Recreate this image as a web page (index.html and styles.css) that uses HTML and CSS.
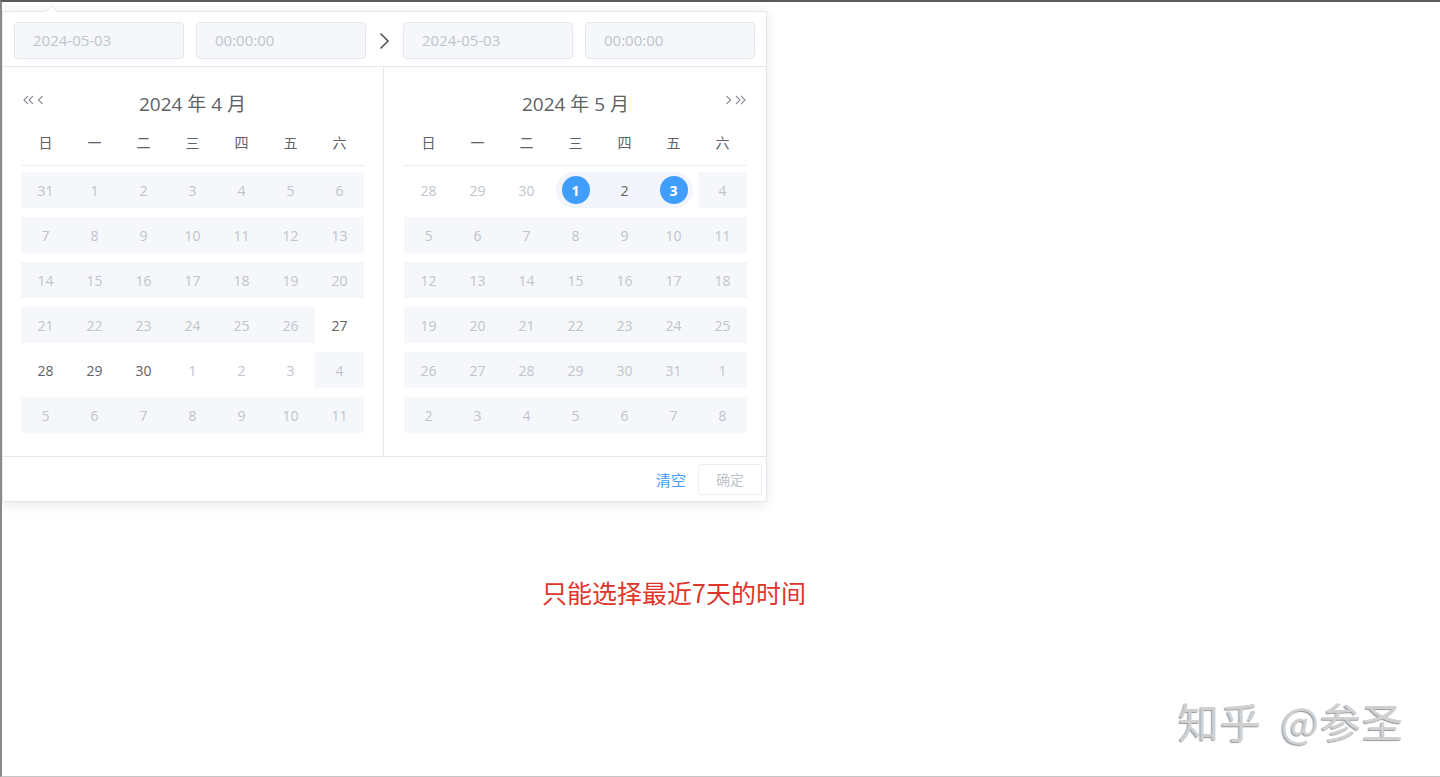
FILE: index.html
```html
<!DOCTYPE html>
<html lang="zh-CN">
<head>
<meta charset="utf-8">
<title>日期范围选择</title>
<link rel="stylesheet" href="styles.css">
</head>
<body>
<div class="frame">
  <div class="picker">
    <div class="picker-head">
      <div class="inp">2024-05-03</div>
      <div class="inp">00:00:00</div>
      <div class="sep"><svg width="11" height="18" viewBox="0 0 11 18"><path d="M1.5 1.5 L9 9 L1.5 16.5" fill="none" stroke="#555" stroke-width="1.6"/></svg></div>
      <div class="inp">2024-05-03</div>
      <div class="inp">00:00:00</div>
    </div>
    <div class="picker-body">
      <div class="panel panel-left">
        <div class="ptitle">
          <span class="nav nav-left">
            <svg width="11" height="10" viewBox="0 0 11 10"><path d="M5 1 L1 5 L5 9 M10 1 L6 5 L10 9" fill="none" stroke="#909399" stroke-width="1.2"/></svg>
            <svg width="7" height="10" viewBox="0 0 7 10"><path d="M5.5 1 L1.5 5 L5.5 9" fill="none" stroke="#909399" stroke-width="1.2"/></svg>
          </span>
          2024 年 4 月
        </div>
        <div class="week"><span>日</span><span>一</span><span>二</span><span>三</span><span>四</span><span>五</span><span>六</span></div>
        <div class="days">
          <span class="c d">31</span><span class="c d">1</span><span class="c d">2</span><span class="c d">3</span><span class="c d">4</span><span class="c d">5</span><span class="c d">6</span>
          <span class="c d">7</span><span class="c d">8</span><span class="c d">9</span><span class="c d">10</span><span class="c d">11</span><span class="c d">12</span><span class="c d">13</span>
          <span class="c d">14</span><span class="c d">15</span><span class="c d">16</span><span class="c d">17</span><span class="c d">18</span><span class="c d">19</span><span class="c d">20</span>
          <span class="c d">21</span><span class="c d">22</span><span class="c d">23</span><span class="c d">24</span><span class="c d">25</span><span class="c d">26</span><span class="c a">27</span>
          <span class="c a">28</span><span class="c a">29</span><span class="c a">30</span><span class="c o">1</span><span class="c o">2</span><span class="c o">3</span><span class="c d">4</span>
          <span class="c d">5</span><span class="c d">6</span><span class="c d">7</span><span class="c d">8</span><span class="c d">9</span><span class="c d">10</span><span class="c d">11</span>
        </div>
      </div>
      <div class="panel panel-right">
        <div class="ptitle">
          2024 年 5 月
          <span class="nav nav-right">
            <svg width="7" height="10" viewBox="0 0 7 10"><path d="M1.5 1 L5.5 5 L1.5 9" fill="none" stroke="#909399" stroke-width="1.2"/></svg>
            <svg width="11" height="10" viewBox="0 0 11 10"><path d="M1 1 L5 5 L1 9 M6 1 L10 5 L6 9" fill="none" stroke="#909399" stroke-width="1.2"/></svg>
          </span>
        </div>
        <div class="week"><span>日</span><span>一</span><span>二</span><span>三</span><span>四</span><span>五</span><span>六</span></div>
        <div class="days">
          <span class="c o">28</span><span class="c o">29</span><span class="c o">30</span><span class="c s"><b class="dot">1</b></span><span class="c r">2</span><span class="c e"><b class="dot">3</b></span><span class="c d">4</span>
          <span class="c d">5</span><span class="c d">6</span><span class="c d">7</span><span class="c d">8</span><span class="c d">9</span><span class="c d">10</span><span class="c d">11</span>
          <span class="c d">12</span><span class="c d">13</span><span class="c d">14</span><span class="c d">15</span><span class="c d">16</span><span class="c d">17</span><span class="c d">18</span>
          <span class="c d">19</span><span class="c d">20</span><span class="c d">21</span><span class="c d">22</span><span class="c d">23</span><span class="c d">24</span><span class="c d">25</span>
          <span class="c d">26</span><span class="c d">27</span><span class="c d">28</span><span class="c d">29</span><span class="c d">30</span><span class="c d">31</span><span class="c d">1</span>
          <span class="c d">2</span><span class="c d">3</span><span class="c d">4</span><span class="c d">5</span><span class="c d">6</span><span class="c d">7</span><span class="c d">8</span>
        </div>
      </div>
    </div>
    <div class="picker-foot">
      <span class="link">清空</span>
      <span class="btn">确定</span>
    </div>
  </div>
  <div class="hint">只能选择最近7天的时间</div>
  <div class="mark">知乎 @参圣</div>
</div>
</body>
</html>
```
FILE: styles.css
```css
html, body {
  margin: 0;
  padding: 0;
  background: #fff;
}
body {
  font-family: "Open Sans", "Noto Sans CJK SC", sans-serif;
  color: #606266;
}
.frame {
  position: relative;
  height: 777px;
  box-sizing: border-box;
  border-top: 2px solid #5a5a5a;
  border-left: 2px solid #8a8a8a;
  border-bottom: 1px solid #c6c6c6;
  overflow: hidden;
}
.picker {
  position: absolute;
  top: 9px;
  left: 0;
  width: 765px;
  height: 491px;
  box-sizing: border-box;
  border: 1px solid #e4e7ed;
  background: #fff;
  box-shadow: 0 2px 12px rgba(0, 0, 0, 0.1);
  display: flex;
  flex-direction: column;
}
.picker::before {
  content: "";
  position: absolute;
  top: -5px;
  left: 44px;
  width: 8px;
  height: 8px;
  background: #fff;
  border-left: 1px solid #e4e7ed;
  border-top: 1px solid #e4e7ed;
  transform: rotate(45deg);
}
.picker-head {
  box-sizing: border-box;
  height: 55px;
  flex: none;
  border-bottom: 1px solid #e4e7ed;
  display: flex;
  align-items: flex-start;
  padding: 10px 10px 0 11px;
  gap: 12px;
}
.inp {
  width: 170px;
  height: 37px;
  box-sizing: border-box;
  border: 1px solid #e4e7ed;
  border-radius: 4px;
  background: #f5f7fa;
  color: #c0c4cc;
  font-size: 15px;
  line-height: 35px;
  padding-left: 18px;
}
.sep {
  width: 13px;
  height: 37px;
  display: flex;
  align-items: center;
  justify-content: center;
}
.picker-body {
  display: flex;
  flex: none;
  height: 390px;
  box-sizing: border-box;
  border-bottom: 1px solid #e4e7ed;
}
.panel {
  box-sizing: border-box;
  padding-top: 22px;
}
.panel-left {
  width: 381px;
  padding-left: 18px;
  border-right: 1px solid #e4e7ed;
}
.panel-right {
  padding-left: 20px;
}
.ptitle {
  position: relative;
  width: 343px;
  height: 30px;
  line-height: 30px;
  text-align: center;
  font-size: 19px;
  color: #606266;
}
.nav {
  position: absolute;
  top: 6px;
  display: flex;
  align-items: center;
  gap: 3px;
  height: 10px;
}
.nav-left { left: 2px; }
.nav-right { right: 1px; }
.week {
  width: 343px;
  display: grid;
  grid-template-columns: repeat(7, 49px);
  padding: 12px 0 10px;
  line-height: 24px;
  font-size: 14px;
  text-align: center;
  border-bottom: 1px solid #ebeef5;
  color: #606266;
}
.days {
  margin-top: 6px;
  width: 343px;
  display: grid;
  grid-template-columns: repeat(7, 49px);
  grid-auto-rows: 36px;
  row-gap: 9px;
  font-size: 14px;
}
.c {
  position: relative;
  display: flex;
  align-items: center;
  justify-content: center;
}
.d { background: #f5f7fa; color: #c0c4cc; }
.o { color: #c0c4cc; }
.a { color: #606266; }
.r { background: #f2f6fc; color: #606266; }
.s::before, .e::before {
  content: "";
  position: absolute;
  top: 0;
  bottom: 0;
  background: #f2f6fc;
}
.s::before { left: 5px; right: 0; border-radius: 18px 0 0 18px; }
.e::before { left: 0; right: 5px; border-radius: 0 18px 18px 0; }
.dot {
  position: relative;
  width: 28px;
  height: 28px;
  border-radius: 50%;
  background: #409eff;
  color: #fff;
  font-weight: 700;
  font-size: 14px;
  display: flex;
  align-items: center;
  justify-content: center;
}
.picker-foot {
  flex: 1;
  display: flex;
  align-items: center;
  justify-content: flex-end;
  gap: 12px;
  padding-right: 4px;
}
.link {
  color: #409eff;
  font-size: 15px;
}
.btn {
  width: 64px;
  height: 31px;
  box-sizing: border-box;
  border: 1px solid #ebeef5;
  border-radius: 3px;
  color: #c0c4cc;
  font-size: 14px;
  display: flex;
  align-items: center;
  justify-content: center;
}
.hint {
  margin: 574px 0 0 540px;
  font-family: "Noto Sans CJK SC", sans-serif;
  font-size: 25px;
  line-height: 32px;
  color: #e0352b;
}
.mark {
  position: absolute;
  right: 36px;
  bottom: 34px;
  font-family: "Noto Sans CJK SC", sans-serif;
  font-size: 41px;
  line-height: 44px;
  color: #d0d0d0;
  text-shadow: -1px 1px 1px rgba(0, 0, 0, 0.4);
  letter-spacing: 1px;
  word-spacing: 8px;
}
```
